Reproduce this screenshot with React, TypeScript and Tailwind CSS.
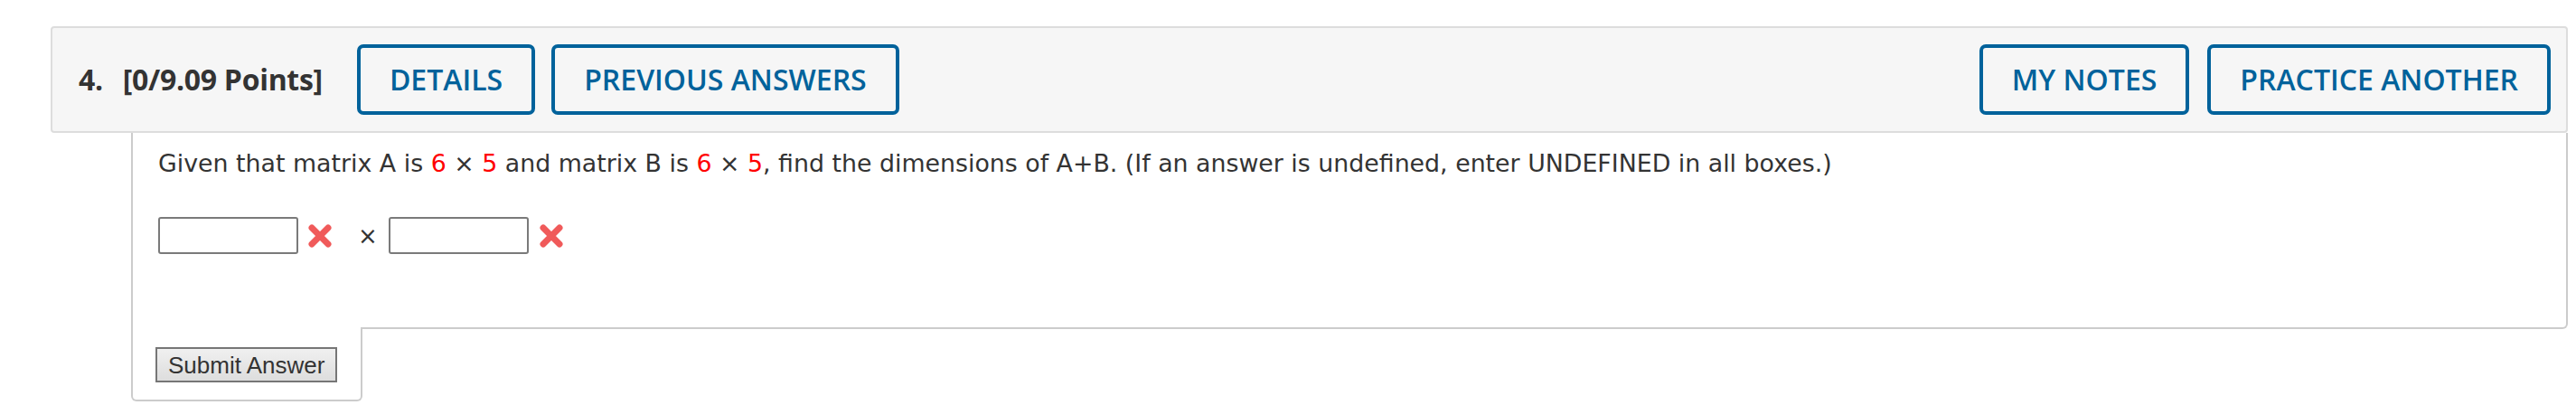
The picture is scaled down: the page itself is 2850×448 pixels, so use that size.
import React from "react"

function RedX() {
  return (
    <svg width="28" height="26" viewBox="0 0 28 26" className="shrink-0">
      <path d="M5 4 L23 22 M23 4 L5 22" stroke="#f05a5a" strokeWidth="7" strokeLinecap="round" />
    </svg>
  )
}

function HeaderButton({ label }: { label: string }) {
  return (
    <button className="h-[78px] px-[32px] border-[4px] border-[#00629b] rounded-[7px] bg-[#f6f6f6] text-[#00629b] text-[32px] font-semibold font-['Open_Sans',sans-serif]">
      {label}
    </button>
  )
}

function AnswerBox() {
  return <input type="text" className="w-[155px] h-[41px] border-2 border-[#7a7a7a] rounded-[3px] bg-white" />
}

export default function App() {
  return (
    <div className="w-[2850px] h-[448px] bg-white pt-[29px] pl-[56px] pr-[9px]">
      {/* Question header */}
      <div className="h-[118px] flex items-center justify-between bg-[#f6f6f6] border-2 border-[#dddddd] rounded-[4px] pl-[29px] pr-[17px]">
        <div className="flex items-center">
          <div className="flex gap-[22px] text-[32px] font-bold text-[#333333] font-['Open_Sans',sans-serif] tracking-[-0.3px] mr-[38px]">
            <span>4.</span>
            <span>[0/9.09 Points]</span>
          </div>
          <div className="flex gap-[18px]">
            <HeaderButton label="DETAILS" />
            <HeaderButton label="PREVIOUS ANSWERS" />
          </div>
        </div>
        <div className="flex gap-[20px]">
          <HeaderButton label="MY NOTES" />
          <HeaderButton label="PRACTICE ANOTHER" />
        </div>
      </div>

      {/* Question body */}
      <div className="ml-[89px]">
        <div className="h-[217px] border-l-2 border-r-2 border-b-2 border-[#cccccc] rounded-br-[6px] pl-[28px] pt-[14px] font-['DejaVu_Sans',sans-serif] text-[#333333]">
          <p className="text-[26.8px] leading-[40px]">
            Given that matrix A is <span className="text-[#ff0000]">6</span> × <span className="text-[#ff0000]">5</span> and matrix B is{" "}
            <span className="text-[#ff0000]">6</span> × <span className="text-[#ff0000]">5</span>, find the dimensions of A+B. (If an answer is
            undefined, enter UNDEFINED in all boxes.)
          </p>
          <div className="flex items-center mt-[39px]">
            <AnswerBox />
            <div className="ml-[10px]">
              <RedX />
            </div>
            <span className="ml-[28px] mr-[12px] text-[26px] leading-none">×</span>
            <AnswerBox />
            <div className="ml-[11px]">
              <RedX />
            </div>
          </div>
        </div>
        <div className="-mt-[2px] w-[256px] h-[82px] bg-white border-l-2 border-r-2 border-b-2 border-[#cccccc] rounded-b-[6px] pl-[25px] pt-[22px]">
          <button className="h-[39px] px-[12px] border-2 border-[#767676] bg-gradient-to-b from-[#f0f0f0] to-[#dddddd] text-[26px] leading-none text-[#333333] font-['Liberation_Sans',sans-serif]">
            Submit Answer
          </button>
        </div>
      </div>
    </div>
  )
}
